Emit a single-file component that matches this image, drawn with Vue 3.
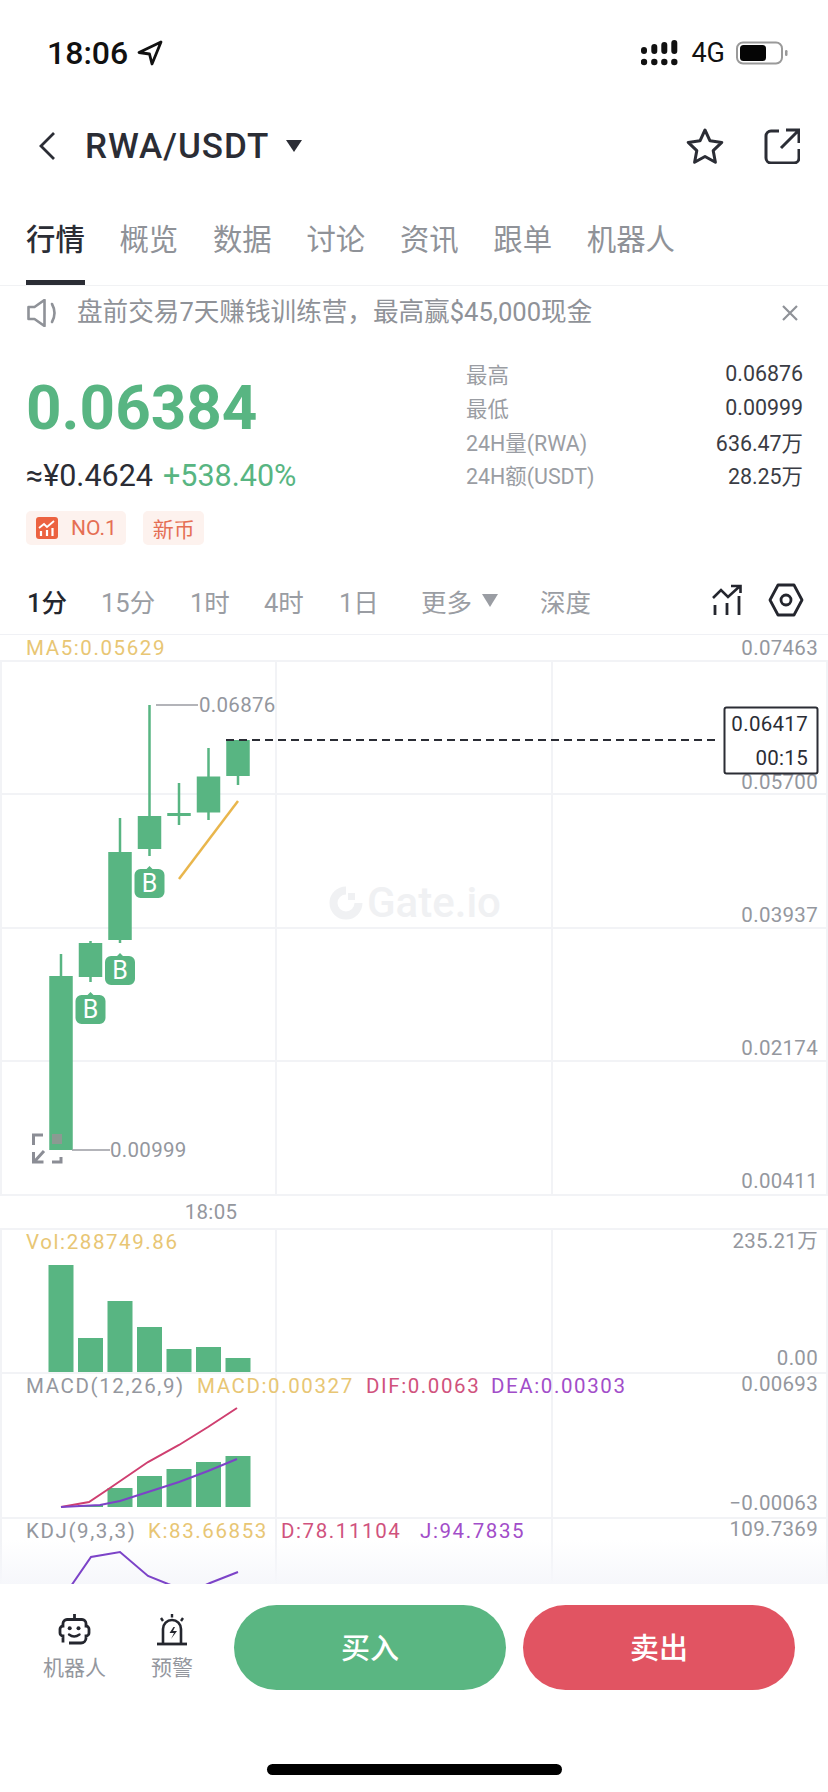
<template>
  <div class="page">
    <div class="status-bar">
      <div class="status-time">
        <span>18:06</span>
        <svg class="status-arrow" width="26" height="26" viewBox="0 0 26 26">
          <path d="M24 2 2 12.5l10.5 1.500 2.500 10z" fill="none" stroke="#111" stroke-width="2.800" stroke-linejoin="round" />
        </svg>
      </div>
      <div class="status-right">
        <svg width="38" height="26" viewBox="0 0 38 26">
          <rect v-for="b in signalBars" :key="b.x" :x="b.x" :y="b.y" width="6" :height="b.h" rx="3" fill="#111" />
          <circle v-for="x in [3, 13.3, 23.3, 33.3]" :key="x" :cx="x" cy="22" r="3.2" fill="#111" />
        </svg>
        <span class="status-net">4G</span>
        <svg width="52" height="24" viewBox="0 0 52 24">
          <rect x="1" y="1.500" width="45" height="21" rx="6" fill="none" stroke="#9a9a9a" stroke-width="2" />
          <rect x="4" y="4" width="26" height="16" rx="3.500" fill="#050505" />
          <rect x="49" y="9" width="2.500" height="6" rx="1.200" fill="#9a9a9a" />
        </svg>
      </div>
    </div>

    <div class="nav">
      <svg class="nav-back" width="18" height="30" viewBox="0 0 18 30">
        <path d="M16 2 3 15l13 13" fill="none" stroke="#2b2d35" stroke-width="2.800" />
      </svg>
      <span class="nav-title">RWA/USDT</span>
      <span class="nav-caret"></span>
      <svg class="nav-star" width="40" height="38" viewBox="0 0 40 38">
        <path d="M20 3l5 10.800 11.800 1.600-8.600 8.200 2.200 11.700L20 29.500 9.600 35.300l2.200-11.700-8.600-8.200L15 13.800z" fill="none" stroke="#2b2d35" stroke-width="3" stroke-linejoin="round" />
      </svg>
      <svg class="nav-share" width="36" height="36" viewBox="0 0 36 36">
        <path d="M15 3H7a5 5 0 0 0-5 5v22a5 5 0 0 0 5 5h23a5 5 0 0 0 5-5v-9" fill="none" stroke="#2b2d35" stroke-width="3" />
        <path d="M17 20 34 3M22 2h13v13" fill="none" stroke="#2b2d35" stroke-width="3" />
      </svg>
    </div>

    <div class="tabs">
      <div v-for="(tab, i) in tabs" :key="tab" class="tab" :class="{ active: i === 0 }">{{ tab }}</div>
    </div>

    <div class="notice">
      <svg width="32" height="28" viewBox="0 0 32 28">
        <path d="M1.500 8v12h6l10 7V1l-10 7z" fill="none" stroke="#8f9298" stroke-width="2.600" stroke-linejoin="round" />
        <path d="M25 5q5 9 0 18" fill="none" stroke="#8f9298" stroke-width="2.600" stroke-linecap="round" />
      </svg>
      <span class="notice-text">盘前交易7天赚钱训练营，最高赢$45,000现金</span>
      <svg class="notice-close" width="18" height="18" viewBox="0 0 18 18">
        <path d="M2 2l14 14M16 2 2 16" stroke="#8f9298" stroke-width="2.200" />
      </svg>
    </div>

    <div class="summary">
      <div class="summary-left">
        <div class="price">0.06384</div>
        <div class="sub-price">
          <span class="cny">≈¥0.4624</span>
          <span class="change">+538.40%</span>
        </div>
        <div class="tags">
          <div class="tag">
            <svg width="22" height="22" viewBox="0 0 22 22">
              <rect width="22" height="22" rx="3" fill="#ec6240" />
              <path d="M3 11l5-4 3 3 7-6" fill="none" stroke="#fff" stroke-width="1.800" />
              <path d="M5 19v-5M11 19v-6M16.500 19v-8" stroke="#fff" stroke-width="2.200" />
            </svg>
            <span>NO.1</span>
          </div>
          <div class="tag">新币</div>
        </div>
      </div>
      <div class="stats">
        <div v-for="s in stats" :key="s.label" class="stat">
          <span class="stat-label">{{ s.label }}</span>
          <span class="stat-value">{{ s.value }}</span>
        </div>
      </div>
    </div>

    <div class="intervals">
      <span v-for="(item, i) in intervals" :key="item.label" class="interval" :class="{ active: i === 0 }" :style="{ width: item.w + 'px' }">{{ item.label }}</span>
      <span class="interval-more">更多<i></i></span>
      <span class="interval depth">深度</span>
      <svg class="chart-type" width="32" height="32" viewBox="0 0 32 32">
        <path d="M2 14l8-8 7 7L29 2M20 2h9.500v7" fill="none" stroke="#24262e" stroke-width="2.600" />
        <path d="M4 21v10M16 19v12M28 12v19" stroke="#24262e" stroke-width="2.800" />
      </svg>
      <svg class="chart-set" width="36" height="34" viewBox="0 0 36 34">
        <path d="M10 2h16l8 15-8 15H10L2 17z" fill="none" stroke="#24262e" stroke-width="2.800" stroke-linejoin="round" />
        <circle cx="18" cy="17" r="5" fill="none" stroke="#24262e" stroke-width="2.800" />
      </svg>
    </div>

    <svg class="chart" width="828" height="949" viewBox="0 635 828 949">
      <defs>
        <linearGradient id="fade" x1="0" y1="0" x2="0" y2="1">
          <stop offset="0" stop-color="#f6f7fb" stop-opacity="0" />
          <stop offset="1" stop-color="#f6f7fb" />
        </linearGradient>
      </defs>

      <!-- grid -->
      <path v-for="y in gridY" :key="y" :d="`M0 ${y}H828`" stroke="#f2f3f6" stroke-width="2" />
      <path v-for="x in [1, 276, 552, 827]" :key="x" :d="`M${x} 661V1195M${x} 1229V1584`" stroke="#f2f3f6" stroke-width="2" />

      <!-- watermark -->
      <path d="M346 890.500A12.500 12.500 0 1 0 358.500 903" fill="none" stroke="#f0f1f3" stroke-width="8" />
      <rect x="348" y="893" width="7" height="7" fill="#f0f1f3" />
      <text x="367" y="917" class="watermark">Gate.io</text>

      <text x="26" y="655" class="axis yellow legend">MA5:0.05629</text>

      <!-- candles -->
      <g v-for="c in candles" :key="c.x">
        <rect :x="c.x - 1.25" :y="c.hi" width="2.500" :height="c.lo - c.hi" fill="#58b582" />
        <rect :x="c.x - 11.750" :y="c.top" width="23.500" :height="c.bottom - c.top" fill="#58b582" />
      </g>
      <g v-for="b in badges" :key="b.x">
        <path :d="`M${b.x - 15} ${b.y + 6}a6 6 0 0 1 6-6h6l3-3 3 3h6a6 6 0 0 1 6 6v17a6 6 0 0 1-6 6h-18a6 6 0 0 1-6-6z`" fill="#58b582" />
        <text :x="b.x" :y="b.y + 23" class="badge-text">B</text>
      </g>
      <path d="M179 879 238 801" stroke="#e9b64c" stroke-width="2.500" fill="none" />

      <!-- hi / lo labels -->
      <path d="M156 705H198M72 1150H110" stroke="#9a9ca3" stroke-width="1.500" />
      <text x="199" y="712" class="axis">0.06876</text>
      <text x="110" y="1157" class="axis">0.00999</text>

      <!-- last price -->
      <path d="M226 740H717" stroke="#2b2d35" stroke-width="2" stroke-dasharray="8 5" />
      <text v-for="a in axisLabels" :key="a.t" x="818" :y="a.y" class="axis end">{{ a.t }}</text>
      <rect x="724.500" y="707.500" width="93" height="66" rx="2" fill="#fff" fill-opacity="0.9" stroke="#2b2d35" stroke-width="2" />
      <text x="808" y="731" class="axis end tip">0.06417</text>
      <text x="808" y="765" class="axis end tip">00:15</text>
      <text x="211" y="1219" class="axis mid">18:05</text>

      <!-- expand -->
      <rect x="52" y="1134" width="10" height="10" fill="#8b9a92" />
      <path d="M33.500 1145v-10H43M61 1157v5h-9M44 1151l-10 11M33.500 1152v10h10" fill="none" stroke="#8b8d95" stroke-width="3" />

      <!-- volume -->
      <text x="26" y="1249" class="axis yellow legend">Vol:288749.86</text>
      <rect v-for="v in volBars" :key="v.x" :x="v.x" :y="v.top" width="25" :height="1372 - v.top" fill="#58b582" />

      <!-- macd -->
      <text y="1393" class="axis legend">
        <tspan x="26">MACD(12,26,9)</tspan>
        <tspan x="197" class="yellow">MACD:0.00327</tspan>
        <tspan x="366" class="pink">DIF:0.0063</tspan>
        <tspan x="491" class="purple">DEA:0.00303</tspan>
      </text>
      <rect v-for="v in macdBars" :key="v.x" :x="v.x" :y="v.top" width="25" :height="1507 - v.top" fill="#58b582" />
      <polyline points="61,1507 89,1502 110,1488 148,1462 179,1445 208,1427 237,1408" fill="none" stroke="#cf3f70" stroke-width="2" />
      <polyline points="61,1507 100,1505 120,1501 148,1492 179,1482 208,1471 237,1459" fill="none" stroke="#7c43c8" stroke-width="2" />

      <!-- kdj -->
      <text y="1538" class="axis legend">
        <tspan x="26">KDJ(9,3,3)</tspan>
        <tspan x="148" class="yellow">K:83.66853</tspan>
        <tspan x="281" class="pink">D:78.11104</tspan>
        <tspan x="420" class="purple">J:94.7835</tspan>
      </text>
      <rect x="0" y="1540" width="828" height="44" fill="url(#fade)" />
      <polyline points="71,1586 91,1557 120,1552 148,1576 168,1584 190,1592 210,1583 238,1572" fill="none" stroke="#7c43c8" stroke-width="2" />
    </svg>

    <div class="bottom-bar">
      <div class="tool robot">
        <svg width="36" height="32" viewBox="0 0 36 32">
          <path d="M17.500 0v5.500" fill="none" stroke="#24262e" stroke-width="2.800" />
          <path d="M10 5.500h15a4 4 0 0 1 4 4V12a3 3 0 0 1 3 3v4a3 3 0 0 1-3 3v2a5 5 0 0 1-5 5H12M10 5.500a4 4 0 0 0-4 4V12a3 3 0 0 0-3 3v4a3 3 0 0 0 3 3v6.500" fill="none" stroke="#24262e" stroke-width="2.800" />
          <circle cx="12.700" cy="14.300" r="2" fill="#24262e" />
          <circle cx="21.500" cy="14.300" r="2" fill="#24262e" />
          <path d="M12 20.500q5 4 10.500 0" fill="none" stroke="#24262e" stroke-width="2.400" stroke-linecap="round" />
        </svg>
        <span>机器人</span>
      </div>
      <div class="tool alarm">
        <svg width="32" height="32" viewBox="0 0 32 32">
          <path d="M7 29V15a9 9 0 0 1 18 0v14" fill="none" stroke="#24262e" stroke-width="2.600" />
          <path d="M1 30h30" stroke="#24262e" stroke-width="2.800" />
          <path d="M17.500 13l-4 6h4.500l-3 6 6-8h-4l2-4z" fill="#24262e" />
          <path d="M16 0v3.500M5 4l2 3M27 4l-2 3" stroke="#24262e" stroke-width="2.400" />
        </svg>
        <span>预警</span>
      </div>
      <div class="trade buy">买入</div>
      <div class="trade sell">卖出</div>
    </div>
    <div class="home-indicator"></div>
  </div>
</template>

<script setup>
const tabs = ['行情', '概览', '数据', '讨论', '资讯', '跟单', '机器人']

const signalBars = [
  { x: 0, y: 7, h: 7 },
  { x: 10.3, y: 4, h: 10 },
  { x: 20.3, y: 2, h: 12 },
  { x: 30.3, y: 0, h: 14 }
]

const stats = [
  { label: '最高', value: '0.06876' },
  { label: '最低', value: '0.00999' },
  { label: '24H量(RWA)', value: '636.47万' },
  { label: '24H额(USDT)', value: '28.25万' }
]

const intervals = [
  { label: '1分', w: 74 },
  { label: '15分', w: 89 },
  { label: '1时', w: 74 },
  { label: '4时', w: 75 },
  { label: '1日', w: 82 }
]

const gridY = [661, 794, 928, 1061, 1195, 1229, 1373, 1518]

const candles = [
  { x: 61, top: 976, bottom: 1150, hi: 954, lo: 1150 },
  { x: 90.5, top: 943, bottom: 977, hi: 941, lo: 982 },
  { x: 120, top: 852, bottom: 940, hi: 818, lo: 943 },
  { x: 149.5, top: 816, bottom: 849, hi: 705, lo: 856 },
  { x: 179, top: 813, bottom: 816, hi: 783, lo: 825 },
  { x: 208.5, top: 776.5, bottom: 812.5, hi: 748, lo: 820 },
  { x: 238, top: 740, bottom: 776, hi: 740, lo: 785 }
]

const badges = [
  { x: 90.5, y: 995 },
  { x: 120, y: 956 },
  { x: 149.5, y: 869 }
]

const axisLabels = [
  { t: '0.07463', y: 655 },
  { t: '0.05700', y: 789 },
  { t: '0.03937', y: 922 },
  { t: '0.02174', y: 1055 },
  { t: '0.00411', y: 1188 },
  { t: '235.21万', y: 1248 },
  { t: '0.00', y: 1365 },
  { t: '0.00693', y: 1391 },
  { t: '−0.00063', y: 1510 },
  { t: '109.7369', y: 1536 }
]

const volBars = [
  { x: 48.5, top: 1265 },
  { x: 78, top: 1338 },
  { x: 107.5, top: 1301 },
  { x: 137, top: 1327 },
  { x: 166.5, top: 1349 },
  { x: 196, top: 1347 },
  { x: 225.5, top: 1358 }
]

const macdBars = [
  { x: 78, top: 1505 },
  { x: 107.5, top: 1488 },
  { x: 137, top: 1476 },
  { x: 166.5, top: 1469 },
  { x: 196, top: 1462 },
  { x: 225.5, top: 1456 }
]
</script>

<style>
html,
body {
  background: #fff;
}
</style>

<style scoped>
.page {
  width: 828px;
  height: 1792px;
  overflow: hidden;
  background: #fff;
  color: #2b2d35;
  font-family: Roboto, "Noto Sans CJK SC", sans-serif;
}

.status-bar {
  height: 106px;
  display: flex;
  align-items: center;
  justify-content: space-between;
  padding: 0 40px 0 47px;
  box-sizing: border-box;
  color: #111;
}

.status-time {
  display: flex;
  align-items: center;
  gap: 9px;
  font-size: 32px;
  font-weight: 500;
}

.status-right {
  display: flex;
  align-items: center;
}

.status-net {
  font-size: 27px;
  margin: 0 11px 0 12px;
}

.nav {
  height: 80px;
  display: flex;
  align-items: center;
  padding: 0 28px 0 38px;
}

.nav-title {
  margin-left: 29px;
  font-size: 35px;
  font-weight: 500;
  letter-spacing: 1px;
}

.nav-caret {
  width: 0;
  height: 0;
  margin-left: 17px;
  border-left: 8px solid transparent;
  border-right: 8px solid transparent;
  border-top: 12px solid #2b2d35;
}

.nav-star {
  margin-left: auto;
}

.nav-share {
  margin-left: 39px;
}

.tabs {
  height: 99px;
  display: flex;
  gap: 34.700px;
  padding-left: 26px;
  border-bottom: 1px solid #f1f2f4;
}

.tab {
  height: 99px;
  box-sizing: border-box;
  padding-top: 37px;
  line-height: 34px;
  font-size: 29.400px;
  color: #8f9298;
}

.tab.active {
  color: #2b2d35;
  font-weight: 500;
  border-bottom: 5px solid #2b2d35;
}

.notice {
  height: 54px;
  display: flex;
  align-items: center;
  padding: 0 29px 0 27px;
}

.notice-text {
  margin: 0 0 7px 18px;
  font-size: 25.600px;
  color: #8f9298;
}

.notice-close {
  margin-left: auto;
}

.summary {
  height: 228px;
  display: flex;
  justify-content: space-between;
  padding: 0 25px 0 26px;
  box-sizing: border-box;
}

.price {
  margin-top: 33px;
  height: 70px;
  line-height: 70px;
  font-size: 62px;
  font-weight: 700;
  color: #58b582;
}

.sub-price {
  margin-top: 13px;
  height: 40px;
  line-height: 40px;
  font-size: 30.500px;
  display: flex;
  gap: 10px;
}

.change {
  color: #58b582;
}

.tags {
  margin-top: 15px;
  display: flex;
  gap: 17px;
}

.tag {
  height: 34px;
  display: flex;
  align-items: center;
  gap: 13px;
  padding: 0 9px 0 10px;
  border-radius: 5px;
  background: #fdf2ee;
  color: #e56f54;
  font-size: 21px;
}

.stats {
  width: 337px;
  margin-top: 17px;
}

.stat {
  height: 33.700px;
  display: flex;
  align-items: center;
  justify-content: space-between;
  font-size: 21.400px;
}

.stat-label {
  color: #9a9da3;
}

.stat-value {
  color: #3a3c44;
}

.intervals {
  height: 67px;
  box-sizing: border-box;
  display: flex;
  align-items: center;
  padding: 0 24px 2px 27px;
  font-size: 25.500px;
  color: #9a9da3;
  border-bottom: 1px solid #f0f1f5;
}

.interval {
  flex: none;
}

.interval.active {
  color: #24262e;
  font-weight: 500;
}

.interval-more {
  width: 119px;
  display: flex;
  align-items: center;
}

.interval-more i {
  width: 0;
  height: 0;
  margin-left: 10px;
  border-left: 8px solid transparent;
  border-right: 8px solid transparent;
  border-top: 13px solid #9a9da3;
}

.chart-type {
  margin-left: auto;
}

.chart-set {
  margin-left: 25px;
}

.chart {
  display: block;
}

.chart text {
  font-family: Roboto, "Noto Sans CJK SC", sans-serif;
}

.axis {
  font-size: 20.500px;
  letter-spacing: 0.3px;
  fill: #94979e;
}

.axis.legend {
  letter-spacing: 1.6px;
}

.axis.end {
  text-anchor: end;
}

.axis.mid {
  text-anchor: middle;
}

.axis.tip {
  fill: #2b2d35;
}

.yellow {
  fill: #e8c674;
}

.axis.yellow {
  fill: #e8c674;
}

.pink {
  fill: #d0527d;
}

.purple {
  fill: #a24dc9;
}

.badge-text {
  font-size: 25px;
  text-anchor: middle;
  fill: #fff;
}

.watermark {
  font-size: 42px;
  font-weight: 500;
  fill: #f0f1f3;
}

.bottom-bar {
  height: 106px;
  box-sizing: border-box;
  display: flex;
  align-items: flex-start;
  padding: 21px 0 0 43px;
}

.tool {
  display: flex;
  flex-direction: column;
  align-items: center;
  padding-top: 9px;
  font-size: 21px;
  line-height: 28px;
  color: #94979e;
}

.tool svg {
  margin-bottom: 8px;
}

.alarm {
  margin-left: 45px;
  margin-right: 41px;
}

.trade {
  width: 272px;
  height: 85px;
  line-height: 89px;
  border-radius: 43px;
  text-align: center;
  color: #fff;
  font-size: 29px;
  font-weight: 500;
}

.buy {
  background: #5ab682;
}

.sell {
  margin-left: 17px;
  background: #e15462;
}

.home-indicator {
  width: 295px;
  height: 11px;
  margin: 74px 0 0 267px;
  border-radius: 6px;
  background: #000;
}
</style>
